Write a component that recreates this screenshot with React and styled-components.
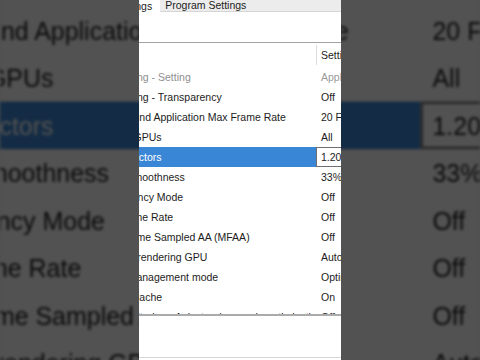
import React from 'react'
import styled, { createGlobalStyle, css } from 'styled-components'

const FONT = '"Liberation Sans", Arial, sans-serif'

const settings = [
  { feature: 'Antialiasing - Setting', value: 'Application-controlled', muted: true },
  { feature: 'Antialiasing - Transparency', value: 'Off' },
  { feature: 'Background Application Max Frame Rate', value: '20 FPS' },
  { feature: 'CUDA - GPUs', value: 'All' },
  { feature: 'DSR - Factors', value: '1.20x DL', selected: true },
  { feature: 'DSR - Smoothness', value: '33%' },
  { feature: 'Low Latency Mode', value: 'Off' },
  { feature: 'Max Frame Rate', value: 'Off' },
  { feature: 'Multi-Frame Sampled AA (MFAA)', value: 'Off' },
  { feature: 'OpenGL rendering GPU', value: 'Auto-select' },
  { feature: 'Power management mode', value: 'Optimal power' },
  { feature: 'Shader Cache', value: 'On' },
  { feature: 'Texture filtering - Anisotropic sample optimization', value: 'Off' },
]

const GlobalStyle = createGlobalStyle`
  html, body {
    margin: 0;
    padding: 0;
    background: #505050;
    font-family: ${FONT};
  }
`

// the short video sits in the middle, a zoomed + dimmed copy fills the sides
const Stage = styled.div`
  position: relative;
  width: 480px;
  height: 360px;
  overflow: hidden;
  display: flex;
  justify-content: center;
  background: #505050;
`

const Backdrop = styled.div`
  position: absolute;
  inset: 0;
  display: flex;
  justify-content: center;
  transform: scale(2.376);
  transform-origin: center;
  filter: brightness(0.32) blur(0.7px);
  pointer-events: none;
`

const Screen = styled.div`
  position: relative;
  z-index: 1;
  width: 202px;
  height: 360px;
  flex-shrink: 0;
  background: #fff;
  overflow: hidden;
  font-family: ${FONT};
  font-size: 10.5px;
  color: #1c1c1c;
`

// the window is wider than the crop, shifted left like the recording
const Window = styled.div`
  width: 401px;
  height: 100%;
  margin-left: -64px;
  display: flex;
  flex-direction: column;
`

const TabStrip = styled.div`
  display: flex;
  height: 12px;
  box-sizing: border-box;
  background: #ececec;
  border-bottom: 1px solid #d6d6d6;
`

const Tab = styled.div`
  display: flex;
  align-items: center;
  white-space: nowrap;
  line-height: 11px;
  padding: 0 5px;
  ${({ $active }) =>
    $active &&
    css`
      background: #fff;
      padding: 0 8px 0 6px;
      height: 12px;
    `}
`

const ListBox = styled.div`
  margin-top: 30px;
  height: 274px;
  box-sizing: border-box;
  border-top: 1px solid #a3a3a3;
  border-bottom: 2px solid #ababab;
  overflow: hidden;
`

const Columns = css`
  display: grid;
  grid-template-columns: 241px 160px;
`

const HeaderRow = styled.div`
  ${Columns};
  height: 24px;
`

const HeaderCell = styled.div`
  display: flex;
  align-items: center;
  white-space: nowrap;
  padding-left: ${({ $divider }) => ($divider ? '4px' : '20px')};
  ${({ $divider }) =>
    $divider &&
    css`
      margin: 2px 0;
      border-left: 1px solid #dcdcdc;
    `}
`

const Row = styled.div`
  ${Columns};
  height: 20px;
`

const FeatureCell = styled.div`
  display: flex;
  align-items: center;
  white-space: nowrap;
  overflow: hidden;
  padding-left: 20px;
  color: ${({ $muted, $selected }) =>
    $selected ? '#fff' : $muted ? '#8e8e8e' : '#1c1c1c'};
  background: ${({ $selected }) => ($selected ? '#3a86d6' : 'transparent')};
`

const ValueCell = styled.div`
  display: flex;
  align-items: center;
  white-space: nowrap;
  box-sizing: border-box;
  padding-left: 5px;
  color: ${({ $muted }) => ($muted ? '#9a9a9a' : '#1c1c1c')};
  ${({ $selected }) =>
    $selected &&
    css`
      padding-left: 4px;
      border: 1px solid #6f6f6f;
      background: #fff;
    `}
`

const BottomRule = styled.div`
  margin-top: 41px;
  height: 1px;
  background: #d8d8d8;
`

function ControlPanel() {
  return (
    <Screen>
      <Window>
        <TabStrip>
          <Tab $active>Global Settings</Tab>
          <Tab>Program Settings</Tab>
        </TabStrip>
        <ListBox>
          <HeaderRow>
            <HeaderCell>Feature</HeaderCell>
            <HeaderCell $divider>Setting</HeaderCell>
          </HeaderRow>
          {settings.map(s => (
            <Row key={s.feature}>
              <FeatureCell $muted={s.muted} $selected={s.selected}>
                {s.feature}
              </FeatureCell>
              <ValueCell $muted={s.muted} $selected={s.selected}>
                {s.value}
              </ValueCell>
            </Row>
          ))}
        </ListBox>
        <BottomRule />
      </Window>
    </Screen>
  )
}

export default function App() {
  return (
    <>
      <GlobalStyle />
      <Stage>
        <Backdrop>
          <ControlPanel />
        </Backdrop>
        <ControlPanel />
      </Stage>
    </>
  )
}
